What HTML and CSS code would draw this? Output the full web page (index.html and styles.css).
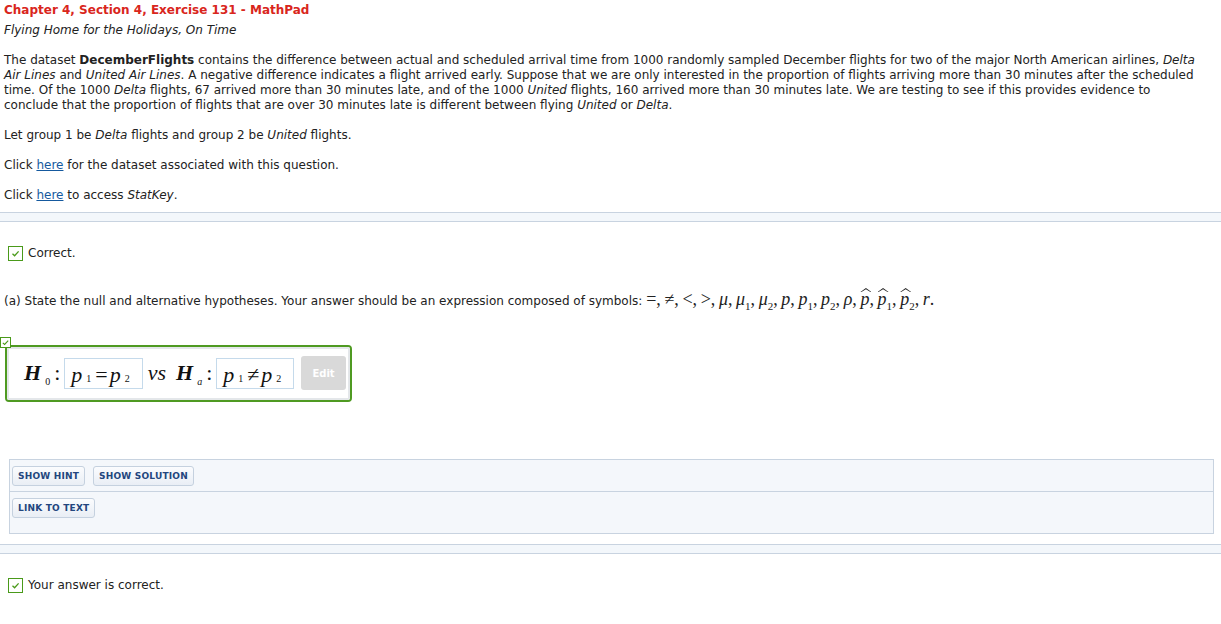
FILE: index.html
```html
<!DOCTYPE html>
<html lang="en">
<head>
    <meta charset="UTF-8">
    <title>Chapter 4, Section 4, Exercise 131 - MathPad</title>
    <link rel="stylesheet" href="styles.css">
</head>
<body>
    <div class="question">
        <h1 class="q-title">Chapter 4, Section 4, Exercise 131 - MathPad</h1>
        <p class="q-subtitle">Flying Home for the Holidays, On Time</p>

        <p class="q-text">The dataset <b>DecemberFlights</b> contains the difference between actual and scheduled arrival time from 1000 randomly sampled December flights for two of the major North American airlines, <i>Delta Air Lines</i> and <i>United Air Lines</i>. A negative difference indicates a flight arrived early. Suppose that we are only interested in the proportion of flights arriving more than 30 minutes after the scheduled time. Of the 1000 <i>Delta</i> flights, 67 arrived more than 30 minutes late, and of the 1000 <i>United</i> flights, 160 arrived more than 30 minutes late. We are testing to see if this provides evidence to conclude that the proportion of flights that are over 30 minutes late is different between flying <i>United</i> or <i>Delta</i>.</p>
        <p class="q-text">Let group 1 be <i>Delta</i> flights and group 2 be <i>United</i> flights.</p>
        <p class="q-text">Click <a href="#">here</a> for the dataset associated with this question.</p>
        <p class="q-text">Click <a href="#">here</a> to access <i>StatKey</i>.</p>
    </div>

    <div class="band"></div>

    <div class="status status-top">
        <span class="check"><svg viewBox="0 0 13 13" width="13" height="13"><path d="M3.5 6.8 L5.6 8.8 L9.6 4.4" fill="none" stroke="#4a9a1a" stroke-width="1.3"/></svg></span>
        Correct.
    </div>

    <p class="part">(a) State the null and alternative hypotheses. Your answer should be an expression composed of symbols: <span class="sym">=,&#8201;&ne;,&#8201;&lt;,&#8201;&gt;,&#8201;<i>&mu;</i>,&#8201;<i>&mu;</i><sub>1</sub>,&#8201;<i>&mu;</i><sub>2</sub>,&#8201;<i>p</i>,&#8201;<i>p</i><sub>1</sub>,&#8201;<i>p</i><sub>2</sub>,&#8201;<i>&rho;</i>,&#8201;<i class="hat">p</i>,&#8201;<i class="hat">p</i><sub>1</sub>,&#8201;<i class="hat">p</i><sub>2</sub>,&#8201;<i>r</i>.</span></p>

    <div class="answer-wrap">
        <span class="mini-check"><svg viewBox="0 0 9 9" width="9" height="9"><path d="M1.8 4.8 L3.6 6.4 L7.2 2.6" fill="none" stroke="#4a9a1a" stroke-width="1.1"/></svg></span>
        <div class="math-field">
            <div class="math-inner">
                <span class="hyp"><b>H</b><sub>0</sub></span>
                <span class="colon">:</span>
                <span class="slot"><i>p</i><sub>1</sub><span class="op">=</span><i>p</i><sub>2</sub></span>
                <span class="vs">vs</span>
                <span class="hyp"><b>H</b><sub><i>a</i></sub></span>
                <span class="colon">:</span>
                <span class="slot"><i>p</i><sub>1</sub><span class="op">&ne;</span><i>p</i><sub>2</sub></span>
                <button class="edit-btn">Edit</button>
            </div>
        </div>
    </div>

    <div class="tools">
        <div class="tools-row">
            <button class="tool-btn">SHOW HINT</button>
            <button class="tool-btn">SHOW SOLUTION</button>
        </div>
        <div class="tools-row tools-row-last">
            <button class="tool-btn">LINK TO TEXT</button>
        </div>
    </div>

    <div class="band band-bottom"></div>

    <div class="status status-bottom">
        <span class="check"><svg viewBox="0 0 13 13" width="13" height="13"><path d="M3.5 6.8 L5.6 8.8 L9.6 4.4" fill="none" stroke="#4a9a1a" stroke-width="1.3"/></svg></span>
        Your answer is correct.
    </div>
</body>
</html>
```

FILE: styles.css
```css
body {
    margin: 0;
    font-family: "DejaVu Sans", Verdana, sans-serif;
    font-size: 12px;
    color: #222;
    background: #fff;
}
.question {
    padding: 3px 15px 0 4px;
}
.q-title {
    margin: 0;
    font-size: 12px;
    font-weight: bold;
    color: #d9261c;
    line-height: 15px;
}
.q-subtitle {
    margin: 5px 0 0 0;
    font-style: italic;
    line-height: 15px;
}
.q-text {
    margin: 15px 0 0 0;
    line-height: 15px;
}
.q-text a {
    color: #15599e;
}
.band {
    margin-top: 9px;
    height: 8px;
    background: #f3f7fb;
    border-top: 1px solid #c8d3e0;
    border-bottom: 1px solid #c8d3e0;
}
.status {
    display: flex;
    align-items: center;
    gap: 5px;
    padding-left: 8px;
    line-height: 15px;
}
.status-top {
    margin-top: 24px;
}
.status-bottom {
    margin-top: 24px;
}
.check {
    display: inline-flex;
    width: 13px;
    height: 13px;
    border: 1px solid #4a9a1a;
    background: #fff;
}
.part {
    margin: 28px 0 0 4px;
    line-height: 20px;
}
.sym {
    font-family: "Liberation Serif", "Times New Roman", serif;
    font-size: 18px;
}
.sym sub {
    font-size: 11px;
}
.hat {
    position: relative;
}
.hat::before {
    content: "";
    position: absolute;
    left: 0;
    top: -1px;
    width: 11px;
    height: 4px;
    background: #222;
    clip-path: polygon(0 100%, 50% 0, 100% 100%, calc(100% - 1px) 100%, 50% 1.2px, 1px 100%);
}
.answer-wrap {
    position: relative;
    margin-top: 21px;
    padding: 8px 0 0 5px;
}
.mini-check {
    position: absolute;
    left: 0;
    top: 0;
    width: 9px;
    height: 9px;
    border: 1px solid #4a9a1a;
    background: #fff;
    display: inline-flex;
}
.math-field {
    width: 343px;
    height: 53px;
    border: 2px solid #4f9a22;
    border-radius: 4px;
}
.math-inner {
    height: 100%;
    box-sizing: border-box;
    border: 2px solid #e4e7ea;
    border-radius: 2px;
    display: flex;
    align-items: center;
    padding: 0 2px 0 15px;
    font-family: "Liberation Serif", "Times New Roman", serif;
    font-size: 22px;
    color: #111;
}
.math-inner sub {
    font-size: 10px;
    font-weight: normal;
    margin-left: 4px;
    vertical-align: -5px;
}
.hyp b {
    font-style: italic;
}
.colon {
    margin: 0 4px 0 4px;
}
.slot {
    display: inline-flex;
    align-items: baseline;
    height: 31px;
    line-height: 31px;
    box-sizing: border-box;
    border: 1px solid #c5daeb;
    padding: 0 8px 0 6px;
}
.slot sub {
    margin-right: 4px;
}
.op {
    margin: 0 2px 0 0;
}
.vs {
    font-style: italic;
    margin: 0 10px 0 5px;
}
.edit-btn {
    margin-left: auto;
    width: 45px;
    height: 34px;
    border: none;
    border-radius: 3px;
    background: #d9d9d9;
    color: #fff;
    font-family: "DejaVu Sans", Verdana, sans-serif;
    font-size: 10px;
    font-weight: bold;
}
.tools {
    margin: 57px 7px 0 9px;
    background: #f4f7fb;
    border: 1px solid #c8d3e0;
}
.tools-row {
    display: flex;
    gap: 8px;
    padding: 6px 2px 5px 2px;
    border-bottom: 1px solid #c8d3e0;
}
.tools-row-last {
    border-bottom: none;
    padding-bottom: 15px;
}
.tool-btn {
    height: 20px;
    padding: 0 5px;
    border: 1px solid #c5d1df;
    border-radius: 3px;
    background: linear-gradient(#fbfcfe, #e9eef5);
    color: #23467e;
    font-family: "DejaVu Sans", Verdana, sans-serif;
    font-size: 9px;
    font-weight: bold;
    letter-spacing: 0.2px;
}
.band-bottom {
    margin-top: 10px;
}
```
